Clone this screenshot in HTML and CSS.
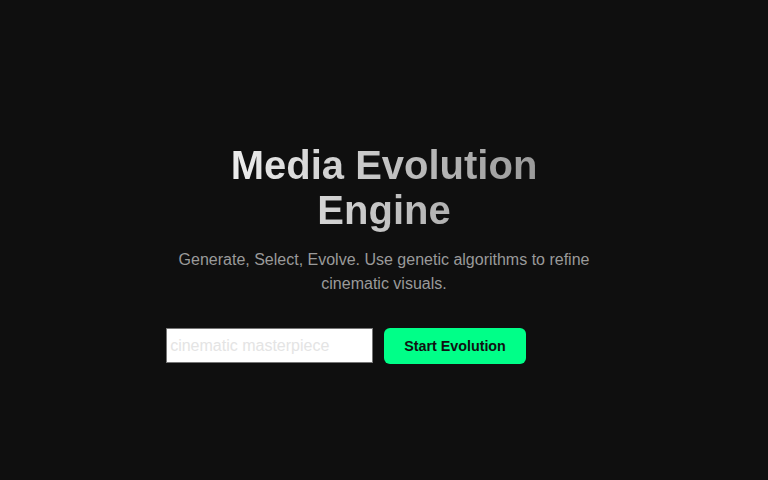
FILE: index.html
```html
<!DOCTYPE html>
<html lang="en">
<head>
<meta charset="utf-8">
<title>Media Evolution Engine</title>
<link rel="stylesheet" href="styles.css">
</head>
<body>
<main class="hero">
  <h1 class="title">Media Evolution Engine</h1>
  <p class="subtitle">Generate, Select, Evolve. Use genetic algorithms to refine cinematic visuals.</p>
  <div class="controls">
    <input class="prompt" type="text" value="cinematic masterpiece">
    <button class="start" type="button">Start Evolution</button>
    <span class="spacer"></span>
  </div>
</main>
</body>
</html>
```
FILE: styles.css
```css
html, body {
  margin: 0;
  padding: 0;
  background: #0f0f0f;
}
body {
  min-height: 100vh;
  display: flex;
  align-items: center;
  justify-content: center;
  box-sizing: border-box;
  padding-top: 26px;
  font-family: "Liberation Sans", Arial, sans-serif;
}
.hero {
  width: 440px;
  text-align: center;
  display: flex;
  flex-direction: column;
  align-items: center;
}
.title {
  margin: 0 0 15px;
  font-size: 40px;
  line-height: 45px;
  font-weight: 700;
  background: linear-gradient(to right, #ffffff, #888888);
  -webkit-background-clip: text;
  background-clip: text;
  color: transparent;
}
.subtitle {
  margin: 0 0 32px;
  font-size: 16px;
  line-height: 24px;
  color: #9a9a9a;
}
.controls {
  display: flex;
  align-items: center;
  gap: 11px;
}
.controls > * {
  flex-shrink: 0;
}
.spacer {
  width: 65px;
  height: 1px;
}
.prompt {
  box-sizing: border-box;
  width: 207px;
  height: 35px;
  padding: 8px 3px;
  border: 1px solid #767676;
  background: #ffffff;
  color: #e4e4e4;
  font-family: "Liberation Sans", Arial, sans-serif;
  font-size: 16px;
  outline: none;
}
.start {
  height: 36px;
  padding: 0 20px;
  border: none;
  border-radius: 6px;
  background: #00ff88;
  color: #111111;
  font-family: "Liberation Sans", Arial, sans-serif;
  font-size: 14.3px;
  font-weight: 700;
  white-space: nowrap;
  cursor: pointer;
}
```
